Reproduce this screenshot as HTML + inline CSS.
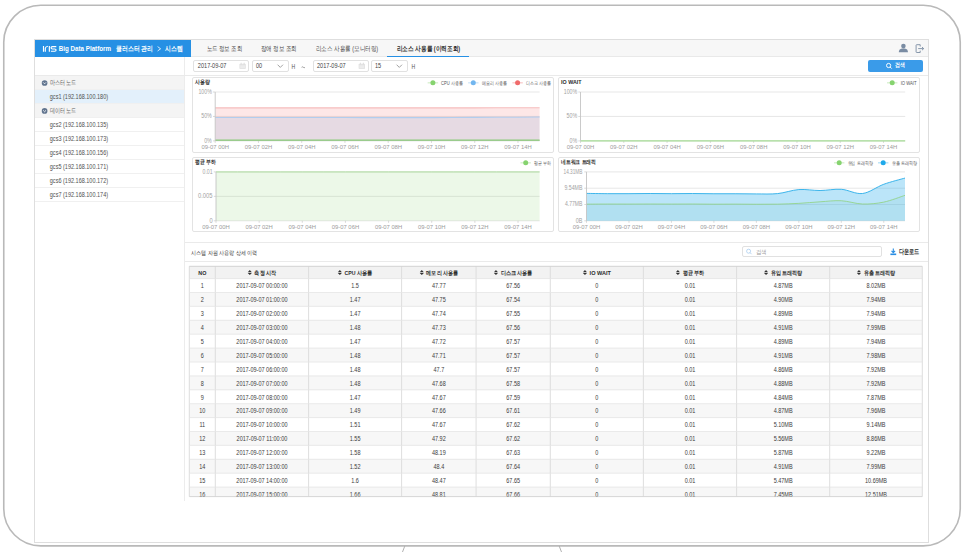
<!DOCTYPE html>
<html><head><meta charset="utf-8"><title>IRIS Big Data Platform</title><style>
*{margin:0;padding:0;box-sizing:border-box}
html,body{width:967px;height:552px;overflow:hidden;background:#fff}
body{position:relative;font-family:"Liberation Sans", sans-serif;color:#333}
.panel,.srow,.thead,.trow,.box{position:absolute}
.app{position:absolute;left:34px;top:39px;width:895px;height:504px;border:1px solid #dedede;background:#fff}
.hdr{position:absolute;left:35px;top:40px;width:156px;height:17px;background:#2690e4}
.tabbar{position:absolute;left:191px;top:40px;width:737px;height:17.3px;background:#f7f7f7;border-bottom:1px solid #e9e9e9}
.uline{position:absolute;left:387.3px;top:55.8px;width:82.2px;height:1.3px;background:#2690e4}
.side{position:absolute;left:35px;top:57px;width:149.5px;height:444px;border-right:1px solid #ececec;background:#fff}
.hline{position:absolute;height:1px;background:#eaeaea}
.srow{left:35px;width:149px;height:14px;border-bottom:1px solid #f0f0f0}
.sgrp{background:#f4f4f4}
.ssel{background:#e3f0fb}
.box{border:1px solid #e1e1e1;border-radius:2px;background:#fff}
.btn{position:absolute;left:867.5px;top:59.9px;width:55.7px;height:11.8px;background:#3a9be9;border-radius:2px}
.panel{border:1px solid #e3e3e3;border-radius:2px;background:#fff}
svg.ov{position:absolute;left:0;top:0}
svg text{font-family:"Liberation Sans", sans-serif}
.thead{background:#f2f2f2}
.trow{background:#f7f7f7}
</style></head><body>
<svg class="ov" width="967" height="552" viewBox="0 0 967 552"><rect x="3.75" y="5.25" width="956.5" height="540.6" rx="37" ry="37" fill="#fff" stroke="#b9b9b9" stroke-width="1.6"/><line x1="404.8" y1="546" x2="402.3" y2="552.5" stroke="#b0b0b0" stroke-width="1"/><line x1="559.2" y1="546" x2="561.7" y2="552.5" stroke="#b0b0b0" stroke-width="1"/></svg>
<div class="app"></div>
<div class="tabbar"></div>
<div class="hdr"></div>
<div class="uline"></div>
<div class="side"></div>
<div class="hline" style="left:35px;top:74.8px;width:893px"></div>
<div class="srow sgrp" style="top:75.70px"></div>
<div class="srow ssel" style="top:89.68px"></div>
<div class="srow sgrp" style="top:103.66px"></div>
<div class="srow sitem" style="top:117.64px"></div>
<div class="srow sitem" style="top:131.62px"></div>
<div class="srow sitem" style="top:145.60px"></div>
<div class="srow sitem" style="top:159.58px"></div>
<div class="srow sitem" style="top:173.56px"></div>
<div class="srow sitem" style="top:187.54px"></div>
<div class="btn"></div>
<div class="panel" style="left:192.00px;top:77.30px;width:362.00px;height:75.30px"></div>
<div class="panel" style="left:558.00px;top:77.30px;width:362.00px;height:75.30px"></div>
<div class="panel" style="left:192.00px;top:157.30px;width:362.00px;height:75.10px"></div>
<div class="panel" style="left:558.00px;top:157.30px;width:362.00px;height:75.10px"></div>
<div class="box" style="left:193.40px;top:60.2px;width:56px;height:11.7px"></div>
<div class="box" style="left:252.00px;top:60.2px;width:37px;height:11.7px"></div>
<div class="box" style="left:312.60px;top:60.2px;width:56px;height:11.7px"></div>
<div class="box" style="left:371.00px;top:60.2px;width:37px;height:11.7px"></div>
<div class="hline" style="left:185px;top:242.2px;width:743px"></div>
<div class="hline" style="left:185px;top:260.8px;width:743px"></div>
<div class="box" style="left:742px;top:246.2px;width:139.6px;height:11.2px"></div>
<div class="thead" style="left:189.30px;top:266.30px;width:733.00px;height:12.30px"></div>
<div class="trow" style="left:189.30px;top:292.50px;width:733.00px;height:13.90px"></div>
<div class="trow" style="left:189.30px;top:320.30px;width:733.00px;height:13.90px"></div>
<div class="trow" style="left:189.30px;top:348.10px;width:733.00px;height:13.90px"></div>
<div class="trow" style="left:189.30px;top:375.90px;width:733.00px;height:13.90px"></div>
<div class="trow" style="left:189.30px;top:403.70px;width:733.00px;height:13.90px"></div>
<div class="trow" style="left:189.30px;top:431.50px;width:733.00px;height:13.90px"></div>
<div class="trow" style="left:189.30px;top:459.30px;width:733.00px;height:13.90px"></div>
<div class="trow" style="left:189.30px;top:487.10px;width:733.00px;height:9.50px"></div>
<svg class="ov" width="967" height="552" viewBox="0 0 967 552"><line x1="189.30" y1="266.30" x2="189.30" y2="496.60" stroke="#dadada" stroke-width="0.9"/><line x1="215.30" y1="266.30" x2="215.30" y2="496.60" stroke="#dadada" stroke-width="0.9"/><line x1="308.60" y1="266.30" x2="308.60" y2="496.60" stroke="#dadada" stroke-width="0.9"/><line x1="401.60" y1="266.30" x2="401.60" y2="496.60" stroke="#dadada" stroke-width="0.9"/><line x1="476.10" y1="266.30" x2="476.10" y2="496.60" stroke="#dadada" stroke-width="0.9"/><line x1="550.30" y1="266.30" x2="550.30" y2="496.60" stroke="#dadada" stroke-width="0.9"/><line x1="643.40" y1="266.30" x2="643.40" y2="496.60" stroke="#dadada" stroke-width="0.9"/><line x1="736.60" y1="266.30" x2="736.60" y2="496.60" stroke="#dadada" stroke-width="0.9"/><line x1="829.70" y1="266.30" x2="829.70" y2="496.60" stroke="#dadada" stroke-width="0.9"/><line x1="922.30" y1="266.30" x2="922.30" y2="496.60" stroke="#dadada" stroke-width="0.9"/><line x1="189.30" y1="266.30" x2="922.30" y2="266.30" stroke="#d2d2d2" stroke-width="1"/><line x1="189.30" y1="278.60" x2="922.30" y2="278.60" stroke="#e4e4e4" stroke-width="0.8"/><line x1="189.30" y1="292.50" x2="922.30" y2="292.50" stroke="#e4e4e4" stroke-width="0.8"/><line x1="189.30" y1="306.40" x2="922.30" y2="306.40" stroke="#e4e4e4" stroke-width="0.8"/><line x1="189.30" y1="320.30" x2="922.30" y2="320.30" stroke="#e4e4e4" stroke-width="0.8"/><line x1="189.30" y1="334.20" x2="922.30" y2="334.20" stroke="#e4e4e4" stroke-width="0.8"/><line x1="189.30" y1="348.10" x2="922.30" y2="348.10" stroke="#e4e4e4" stroke-width="0.8"/><line x1="189.30" y1="362.00" x2="922.30" y2="362.00" stroke="#e4e4e4" stroke-width="0.8"/><line x1="189.30" y1="375.90" x2="922.30" y2="375.90" stroke="#e4e4e4" stroke-width="0.8"/><line x1="189.30" y1="389.80" x2="922.30" y2="389.80" stroke="#e4e4e4" stroke-width="0.8"/><line x1="189.30" y1="403.70" x2="922.30" y2="403.70" stroke="#e4e4e4" stroke-width="0.8"/><line x1="189.30" y1="417.60" x2="922.30" y2="417.60" stroke="#e4e4e4" stroke-width="0.8"/><line x1="189.30" y1="431.50" x2="922.30" y2="431.50" stroke="#e4e4e4" stroke-width="0.8"/><line x1="189.30" y1="445.40" x2="922.30" y2="445.40" stroke="#e4e4e4" stroke-width="0.8"/><line x1="189.30" y1="459.30" x2="922.30" y2="459.30" stroke="#e4e4e4" stroke-width="0.8"/><line x1="189.30" y1="473.20" x2="922.30" y2="473.20" stroke="#e4e4e4" stroke-width="0.8"/><line x1="189.30" y1="487.10" x2="922.30" y2="487.10" stroke="#e4e4e4" stroke-width="0.8"/><line x1="189.30" y1="496.60" x2="922.30" y2="496.60" stroke="#d6d6d6" stroke-width="1"/><clipPath id="tc"><rect x="185" y="260" width="745" height="236.6"/></clipPath><g clip-path="url(#tc)"><text x="202.30" y="288.30" font-size="6.6" fill="#3c3c3c" text-anchor="middle" textLength="3.06" lengthAdjust="spacingAndGlyphs">1</text><text x="261.95" y="288.30" font-size="6.6" fill="#3c3c3c" text-anchor="middle" textLength="51.17" lengthAdjust="spacingAndGlyphs">2017-09-07 00:00:00</text><text x="355.10" y="288.30" font-size="6.6" fill="#3c3c3c" text-anchor="middle" textLength="7.66" lengthAdjust="spacingAndGlyphs">1.5</text><text x="438.85" y="288.30" font-size="6.6" fill="#3c3c3c" text-anchor="middle" textLength="13.79" lengthAdjust="spacingAndGlyphs">47.77</text><text x="513.20" y="288.30" font-size="6.6" fill="#3c3c3c" text-anchor="middle" textLength="13.79" lengthAdjust="spacingAndGlyphs">67.56</text><text x="596.85" y="288.30" font-size="6.6" fill="#3c3c3c" text-anchor="middle" textLength="3.06" lengthAdjust="spacingAndGlyphs">0</text><text x="690.00" y="288.30" font-size="6.6" fill="#3c3c3c" text-anchor="middle" textLength="10.73" lengthAdjust="spacingAndGlyphs">0.01</text><text x="783.15" y="288.30" font-size="6.6" fill="#3c3c3c" text-anchor="middle" textLength="18.99" lengthAdjust="spacingAndGlyphs">4.87MB</text><text x="876.00" y="288.30" font-size="6.6" fill="#3c3c3c" text-anchor="middle" textLength="18.99" lengthAdjust="spacingAndGlyphs">8.02MB</text><text x="202.30" y="302.20" font-size="6.6" fill="#3c3c3c" text-anchor="middle" textLength="3.06" lengthAdjust="spacingAndGlyphs">2</text><text x="261.95" y="302.20" font-size="6.6" fill="#3c3c3c" text-anchor="middle" textLength="51.17" lengthAdjust="spacingAndGlyphs">2017-09-07 01:00:00</text><text x="355.10" y="302.20" font-size="6.6" fill="#3c3c3c" text-anchor="middle" textLength="10.73" lengthAdjust="spacingAndGlyphs">1.47</text><text x="438.85" y="302.20" font-size="6.6" fill="#3c3c3c" text-anchor="middle" textLength="13.79" lengthAdjust="spacingAndGlyphs">47.75</text><text x="513.20" y="302.20" font-size="6.6" fill="#3c3c3c" text-anchor="middle" textLength="13.79" lengthAdjust="spacingAndGlyphs">67.54</text><text x="596.85" y="302.20" font-size="6.6" fill="#3c3c3c" text-anchor="middle" textLength="3.06" lengthAdjust="spacingAndGlyphs">0</text><text x="690.00" y="302.20" font-size="6.6" fill="#3c3c3c" text-anchor="middle" textLength="10.73" lengthAdjust="spacingAndGlyphs">0.01</text><text x="783.15" y="302.20" font-size="6.6" fill="#3c3c3c" text-anchor="middle" textLength="18.99" lengthAdjust="spacingAndGlyphs">4.90MB</text><text x="876.00" y="302.20" font-size="6.6" fill="#3c3c3c" text-anchor="middle" textLength="18.99" lengthAdjust="spacingAndGlyphs">7.94MB</text><text x="202.30" y="316.10" font-size="6.6" fill="#3c3c3c" text-anchor="middle" textLength="3.06" lengthAdjust="spacingAndGlyphs">3</text><text x="261.95" y="316.10" font-size="6.6" fill="#3c3c3c" text-anchor="middle" textLength="51.17" lengthAdjust="spacingAndGlyphs">2017-09-07 02:00:00</text><text x="355.10" y="316.10" font-size="6.6" fill="#3c3c3c" text-anchor="middle" textLength="10.73" lengthAdjust="spacingAndGlyphs">1.47</text><text x="438.85" y="316.10" font-size="6.6" fill="#3c3c3c" text-anchor="middle" textLength="13.79" lengthAdjust="spacingAndGlyphs">47.74</text><text x="513.20" y="316.10" font-size="6.6" fill="#3c3c3c" text-anchor="middle" textLength="13.79" lengthAdjust="spacingAndGlyphs">67.55</text><text x="596.85" y="316.10" font-size="6.6" fill="#3c3c3c" text-anchor="middle" textLength="3.06" lengthAdjust="spacingAndGlyphs">0</text><text x="690.00" y="316.10" font-size="6.6" fill="#3c3c3c" text-anchor="middle" textLength="10.73" lengthAdjust="spacingAndGlyphs">0.01</text><text x="783.15" y="316.10" font-size="6.6" fill="#3c3c3c" text-anchor="middle" textLength="18.99" lengthAdjust="spacingAndGlyphs">4.89MB</text><text x="876.00" y="316.10" font-size="6.6" fill="#3c3c3c" text-anchor="middle" textLength="18.99" lengthAdjust="spacingAndGlyphs">7.94MB</text><text x="202.30" y="330.00" font-size="6.6" fill="#3c3c3c" text-anchor="middle" textLength="3.06" lengthAdjust="spacingAndGlyphs">4</text><text x="261.95" y="330.00" font-size="6.6" fill="#3c3c3c" text-anchor="middle" textLength="51.17" lengthAdjust="spacingAndGlyphs">2017-09-07 03:00:00</text><text x="355.10" y="330.00" font-size="6.6" fill="#3c3c3c" text-anchor="middle" textLength="10.73" lengthAdjust="spacingAndGlyphs">1.48</text><text x="438.85" y="330.00" font-size="6.6" fill="#3c3c3c" text-anchor="middle" textLength="13.79" lengthAdjust="spacingAndGlyphs">47.73</text><text x="513.20" y="330.00" font-size="6.6" fill="#3c3c3c" text-anchor="middle" textLength="13.79" lengthAdjust="spacingAndGlyphs">67.56</text><text x="596.85" y="330.00" font-size="6.6" fill="#3c3c3c" text-anchor="middle" textLength="3.06" lengthAdjust="spacingAndGlyphs">0</text><text x="690.00" y="330.00" font-size="6.6" fill="#3c3c3c" text-anchor="middle" textLength="10.73" lengthAdjust="spacingAndGlyphs">0.01</text><text x="783.15" y="330.00" font-size="6.6" fill="#3c3c3c" text-anchor="middle" textLength="18.99" lengthAdjust="spacingAndGlyphs">4.91MB</text><text x="876.00" y="330.00" font-size="6.6" fill="#3c3c3c" text-anchor="middle" textLength="18.99" lengthAdjust="spacingAndGlyphs">7.99MB</text><text x="202.30" y="343.90" font-size="6.6" fill="#3c3c3c" text-anchor="middle" textLength="3.06" lengthAdjust="spacingAndGlyphs">5</text><text x="261.95" y="343.90" font-size="6.6" fill="#3c3c3c" text-anchor="middle" textLength="51.17" lengthAdjust="spacingAndGlyphs">2017-09-07 04:00:00</text><text x="355.10" y="343.90" font-size="6.6" fill="#3c3c3c" text-anchor="middle" textLength="10.73" lengthAdjust="spacingAndGlyphs">1.47</text><text x="438.85" y="343.90" font-size="6.6" fill="#3c3c3c" text-anchor="middle" textLength="13.79" lengthAdjust="spacingAndGlyphs">47.72</text><text x="513.20" y="343.90" font-size="6.6" fill="#3c3c3c" text-anchor="middle" textLength="13.79" lengthAdjust="spacingAndGlyphs">67.57</text><text x="596.85" y="343.90" font-size="6.6" fill="#3c3c3c" text-anchor="middle" textLength="3.06" lengthAdjust="spacingAndGlyphs">0</text><text x="690.00" y="343.90" font-size="6.6" fill="#3c3c3c" text-anchor="middle" textLength="10.73" lengthAdjust="spacingAndGlyphs">0.01</text><text x="783.15" y="343.90" font-size="6.6" fill="#3c3c3c" text-anchor="middle" textLength="18.99" lengthAdjust="spacingAndGlyphs">4.89MB</text><text x="876.00" y="343.90" font-size="6.6" fill="#3c3c3c" text-anchor="middle" textLength="18.99" lengthAdjust="spacingAndGlyphs">7.94MB</text><text x="202.30" y="357.80" font-size="6.6" fill="#3c3c3c" text-anchor="middle" textLength="3.06" lengthAdjust="spacingAndGlyphs">6</text><text x="261.95" y="357.80" font-size="6.6" fill="#3c3c3c" text-anchor="middle" textLength="51.17" lengthAdjust="spacingAndGlyphs">2017-09-07 05:00:00</text><text x="355.10" y="357.80" font-size="6.6" fill="#3c3c3c" text-anchor="middle" textLength="10.73" lengthAdjust="spacingAndGlyphs">1.48</text><text x="438.85" y="357.80" font-size="6.6" fill="#3c3c3c" text-anchor="middle" textLength="13.79" lengthAdjust="spacingAndGlyphs">47.71</text><text x="513.20" y="357.80" font-size="6.6" fill="#3c3c3c" text-anchor="middle" textLength="13.79" lengthAdjust="spacingAndGlyphs">67.57</text><text x="596.85" y="357.80" font-size="6.6" fill="#3c3c3c" text-anchor="middle" textLength="3.06" lengthAdjust="spacingAndGlyphs">0</text><text x="690.00" y="357.80" font-size="6.6" fill="#3c3c3c" text-anchor="middle" textLength="10.73" lengthAdjust="spacingAndGlyphs">0.01</text><text x="783.15" y="357.80" font-size="6.6" fill="#3c3c3c" text-anchor="middle" textLength="18.99" lengthAdjust="spacingAndGlyphs">4.91MB</text><text x="876.00" y="357.80" font-size="6.6" fill="#3c3c3c" text-anchor="middle" textLength="18.99" lengthAdjust="spacingAndGlyphs">7.98MB</text><text x="202.30" y="371.70" font-size="6.6" fill="#3c3c3c" text-anchor="middle" textLength="3.06" lengthAdjust="spacingAndGlyphs">7</text><text x="261.95" y="371.70" font-size="6.6" fill="#3c3c3c" text-anchor="middle" textLength="51.17" lengthAdjust="spacingAndGlyphs">2017-09-07 06:00:00</text><text x="355.10" y="371.70" font-size="6.6" fill="#3c3c3c" text-anchor="middle" textLength="10.73" lengthAdjust="spacingAndGlyphs">1.48</text><text x="438.85" y="371.70" font-size="6.6" fill="#3c3c3c" text-anchor="middle" textLength="10.73" lengthAdjust="spacingAndGlyphs">47.7</text><text x="513.20" y="371.70" font-size="6.6" fill="#3c3c3c" text-anchor="middle" textLength="13.79" lengthAdjust="spacingAndGlyphs">67.57</text><text x="596.85" y="371.70" font-size="6.6" fill="#3c3c3c" text-anchor="middle" textLength="3.06" lengthAdjust="spacingAndGlyphs">0</text><text x="690.00" y="371.70" font-size="6.6" fill="#3c3c3c" text-anchor="middle" textLength="10.73" lengthAdjust="spacingAndGlyphs">0.01</text><text x="783.15" y="371.70" font-size="6.6" fill="#3c3c3c" text-anchor="middle" textLength="18.99" lengthAdjust="spacingAndGlyphs">4.86MB</text><text x="876.00" y="371.70" font-size="6.6" fill="#3c3c3c" text-anchor="middle" textLength="18.99" lengthAdjust="spacingAndGlyphs">7.92MB</text><text x="202.30" y="385.60" font-size="6.6" fill="#3c3c3c" text-anchor="middle" textLength="3.06" lengthAdjust="spacingAndGlyphs">8</text><text x="261.95" y="385.60" font-size="6.6" fill="#3c3c3c" text-anchor="middle" textLength="51.17" lengthAdjust="spacingAndGlyphs">2017-09-07 07:00:00</text><text x="355.10" y="385.60" font-size="6.6" fill="#3c3c3c" text-anchor="middle" textLength="10.73" lengthAdjust="spacingAndGlyphs">1.48</text><text x="438.85" y="385.60" font-size="6.6" fill="#3c3c3c" text-anchor="middle" textLength="13.79" lengthAdjust="spacingAndGlyphs">47.68</text><text x="513.20" y="385.60" font-size="6.6" fill="#3c3c3c" text-anchor="middle" textLength="13.79" lengthAdjust="spacingAndGlyphs">67.58</text><text x="596.85" y="385.60" font-size="6.6" fill="#3c3c3c" text-anchor="middle" textLength="3.06" lengthAdjust="spacingAndGlyphs">0</text><text x="690.00" y="385.60" font-size="6.6" fill="#3c3c3c" text-anchor="middle" textLength="10.73" lengthAdjust="spacingAndGlyphs">0.01</text><text x="783.15" y="385.60" font-size="6.6" fill="#3c3c3c" text-anchor="middle" textLength="18.99" lengthAdjust="spacingAndGlyphs">4.88MB</text><text x="876.00" y="385.60" font-size="6.6" fill="#3c3c3c" text-anchor="middle" textLength="18.99" lengthAdjust="spacingAndGlyphs">7.92MB</text><text x="202.30" y="399.50" font-size="6.6" fill="#3c3c3c" text-anchor="middle" textLength="3.06" lengthAdjust="spacingAndGlyphs">9</text><text x="261.95" y="399.50" font-size="6.6" fill="#3c3c3c" text-anchor="middle" textLength="51.17" lengthAdjust="spacingAndGlyphs">2017-09-07 08:00:00</text><text x="355.10" y="399.50" font-size="6.6" fill="#3c3c3c" text-anchor="middle" textLength="10.73" lengthAdjust="spacingAndGlyphs">1.47</text><text x="438.85" y="399.50" font-size="6.6" fill="#3c3c3c" text-anchor="middle" textLength="13.79" lengthAdjust="spacingAndGlyphs">47.67</text><text x="513.20" y="399.50" font-size="6.6" fill="#3c3c3c" text-anchor="middle" textLength="13.79" lengthAdjust="spacingAndGlyphs">67.59</text><text x="596.85" y="399.50" font-size="6.6" fill="#3c3c3c" text-anchor="middle" textLength="3.06" lengthAdjust="spacingAndGlyphs">0</text><text x="690.00" y="399.50" font-size="6.6" fill="#3c3c3c" text-anchor="middle" textLength="10.73" lengthAdjust="spacingAndGlyphs">0.01</text><text x="783.15" y="399.50" font-size="6.6" fill="#3c3c3c" text-anchor="middle" textLength="18.99" lengthAdjust="spacingAndGlyphs">4.84MB</text><text x="876.00" y="399.50" font-size="6.6" fill="#3c3c3c" text-anchor="middle" textLength="18.99" lengthAdjust="spacingAndGlyphs">7.87MB</text><text x="202.30" y="413.40" font-size="6.6" fill="#3c3c3c" text-anchor="middle" textLength="6.13" lengthAdjust="spacingAndGlyphs">10</text><text x="261.95" y="413.40" font-size="6.6" fill="#3c3c3c" text-anchor="middle" textLength="51.17" lengthAdjust="spacingAndGlyphs">2017-09-07 09:00:00</text><text x="355.10" y="413.40" font-size="6.6" fill="#3c3c3c" text-anchor="middle" textLength="10.73" lengthAdjust="spacingAndGlyphs">1.49</text><text x="438.85" y="413.40" font-size="6.6" fill="#3c3c3c" text-anchor="middle" textLength="13.79" lengthAdjust="spacingAndGlyphs">47.66</text><text x="513.20" y="413.40" font-size="6.6" fill="#3c3c3c" text-anchor="middle" textLength="13.79" lengthAdjust="spacingAndGlyphs">67.61</text><text x="596.85" y="413.40" font-size="6.6" fill="#3c3c3c" text-anchor="middle" textLength="3.06" lengthAdjust="spacingAndGlyphs">0</text><text x="690.00" y="413.40" font-size="6.6" fill="#3c3c3c" text-anchor="middle" textLength="10.73" lengthAdjust="spacingAndGlyphs">0.01</text><text x="783.15" y="413.40" font-size="6.6" fill="#3c3c3c" text-anchor="middle" textLength="18.99" lengthAdjust="spacingAndGlyphs">4.87MB</text><text x="876.00" y="413.40" font-size="6.6" fill="#3c3c3c" text-anchor="middle" textLength="18.99" lengthAdjust="spacingAndGlyphs">7.96MB</text><text x="202.30" y="427.30" font-size="6.6" fill="#3c3c3c" text-anchor="middle" textLength="5.72" lengthAdjust="spacingAndGlyphs">11</text><text x="261.95" y="427.30" font-size="6.6" fill="#3c3c3c" text-anchor="middle" textLength="51.17" lengthAdjust="spacingAndGlyphs">2017-09-07 10:00:00</text><text x="355.10" y="427.30" font-size="6.6" fill="#3c3c3c" text-anchor="middle" textLength="10.73" lengthAdjust="spacingAndGlyphs">1.51</text><text x="438.85" y="427.30" font-size="6.6" fill="#3c3c3c" text-anchor="middle" textLength="13.79" lengthAdjust="spacingAndGlyphs">47.67</text><text x="513.20" y="427.30" font-size="6.6" fill="#3c3c3c" text-anchor="middle" textLength="13.79" lengthAdjust="spacingAndGlyphs">67.62</text><text x="596.85" y="427.30" font-size="6.6" fill="#3c3c3c" text-anchor="middle" textLength="3.06" lengthAdjust="spacingAndGlyphs">0</text><text x="690.00" y="427.30" font-size="6.6" fill="#3c3c3c" text-anchor="middle" textLength="10.73" lengthAdjust="spacingAndGlyphs">0.01</text><text x="783.15" y="427.30" font-size="6.6" fill="#3c3c3c" text-anchor="middle" textLength="18.99" lengthAdjust="spacingAndGlyphs">5.10MB</text><text x="876.00" y="427.30" font-size="6.6" fill="#3c3c3c" text-anchor="middle" textLength="18.99" lengthAdjust="spacingAndGlyphs">9.14MB</text><text x="202.30" y="441.20" font-size="6.6" fill="#3c3c3c" text-anchor="middle" textLength="6.13" lengthAdjust="spacingAndGlyphs">12</text><text x="261.95" y="441.20" font-size="6.6" fill="#3c3c3c" text-anchor="middle" textLength="50.76" lengthAdjust="spacingAndGlyphs">2017-09-07 11:00:00</text><text x="355.10" y="441.20" font-size="6.6" fill="#3c3c3c" text-anchor="middle" textLength="10.73" lengthAdjust="spacingAndGlyphs">1.55</text><text x="438.85" y="441.20" font-size="6.6" fill="#3c3c3c" text-anchor="middle" textLength="13.79" lengthAdjust="spacingAndGlyphs">47.92</text><text x="513.20" y="441.20" font-size="6.6" fill="#3c3c3c" text-anchor="middle" textLength="13.79" lengthAdjust="spacingAndGlyphs">67.62</text><text x="596.85" y="441.20" font-size="6.6" fill="#3c3c3c" text-anchor="middle" textLength="3.06" lengthAdjust="spacingAndGlyphs">0</text><text x="690.00" y="441.20" font-size="6.6" fill="#3c3c3c" text-anchor="middle" textLength="10.73" lengthAdjust="spacingAndGlyphs">0.01</text><text x="783.15" y="441.20" font-size="6.6" fill="#3c3c3c" text-anchor="middle" textLength="18.99" lengthAdjust="spacingAndGlyphs">5.56MB</text><text x="876.00" y="441.20" font-size="6.6" fill="#3c3c3c" text-anchor="middle" textLength="18.99" lengthAdjust="spacingAndGlyphs">8.86MB</text><text x="202.30" y="455.10" font-size="6.6" fill="#3c3c3c" text-anchor="middle" textLength="6.13" lengthAdjust="spacingAndGlyphs">13</text><text x="261.95" y="455.10" font-size="6.6" fill="#3c3c3c" text-anchor="middle" textLength="51.17" lengthAdjust="spacingAndGlyphs">2017-09-07 12:00:00</text><text x="355.10" y="455.10" font-size="6.6" fill="#3c3c3c" text-anchor="middle" textLength="10.73" lengthAdjust="spacingAndGlyphs">1.58</text><text x="438.85" y="455.10" font-size="6.6" fill="#3c3c3c" text-anchor="middle" textLength="13.79" lengthAdjust="spacingAndGlyphs">48.19</text><text x="513.20" y="455.10" font-size="6.6" fill="#3c3c3c" text-anchor="middle" textLength="13.79" lengthAdjust="spacingAndGlyphs">67.63</text><text x="596.85" y="455.10" font-size="6.6" fill="#3c3c3c" text-anchor="middle" textLength="3.06" lengthAdjust="spacingAndGlyphs">0</text><text x="690.00" y="455.10" font-size="6.6" fill="#3c3c3c" text-anchor="middle" textLength="10.73" lengthAdjust="spacingAndGlyphs">0.01</text><text x="783.15" y="455.10" font-size="6.6" fill="#3c3c3c" text-anchor="middle" textLength="18.99" lengthAdjust="spacingAndGlyphs">5.87MB</text><text x="876.00" y="455.10" font-size="6.6" fill="#3c3c3c" text-anchor="middle" textLength="18.99" lengthAdjust="spacingAndGlyphs">9.22MB</text><text x="202.30" y="469.00" font-size="6.6" fill="#3c3c3c" text-anchor="middle" textLength="6.13" lengthAdjust="spacingAndGlyphs">14</text><text x="261.95" y="469.00" font-size="6.6" fill="#3c3c3c" text-anchor="middle" textLength="51.17" lengthAdjust="spacingAndGlyphs">2017-09-07 13:00:00</text><text x="355.10" y="469.00" font-size="6.6" fill="#3c3c3c" text-anchor="middle" textLength="10.73" lengthAdjust="spacingAndGlyphs">1.52</text><text x="438.85" y="469.00" font-size="6.6" fill="#3c3c3c" text-anchor="middle" textLength="10.73" lengthAdjust="spacingAndGlyphs">48.4</text><text x="513.20" y="469.00" font-size="6.6" fill="#3c3c3c" text-anchor="middle" textLength="13.79" lengthAdjust="spacingAndGlyphs">67.64</text><text x="596.85" y="469.00" font-size="6.6" fill="#3c3c3c" text-anchor="middle" textLength="3.06" lengthAdjust="spacingAndGlyphs">0</text><text x="690.00" y="469.00" font-size="6.6" fill="#3c3c3c" text-anchor="middle" textLength="10.73" lengthAdjust="spacingAndGlyphs">0.01</text><text x="783.15" y="469.00" font-size="6.6" fill="#3c3c3c" text-anchor="middle" textLength="18.99" lengthAdjust="spacingAndGlyphs">4.91MB</text><text x="876.00" y="469.00" font-size="6.6" fill="#3c3c3c" text-anchor="middle" textLength="18.99" lengthAdjust="spacingAndGlyphs">7.99MB</text><text x="202.30" y="482.90" font-size="6.6" fill="#3c3c3c" text-anchor="middle" textLength="6.13" lengthAdjust="spacingAndGlyphs">15</text><text x="261.95" y="482.90" font-size="6.6" fill="#3c3c3c" text-anchor="middle" textLength="51.17" lengthAdjust="spacingAndGlyphs">2017-09-07 14:00:00</text><text x="355.10" y="482.90" font-size="6.6" fill="#3c3c3c" text-anchor="middle" textLength="7.66" lengthAdjust="spacingAndGlyphs">1.6</text><text x="438.85" y="482.90" font-size="6.6" fill="#3c3c3c" text-anchor="middle" textLength="13.79" lengthAdjust="spacingAndGlyphs">48.47</text><text x="513.20" y="482.90" font-size="6.6" fill="#3c3c3c" text-anchor="middle" textLength="13.79" lengthAdjust="spacingAndGlyphs">67.65</text><text x="596.85" y="482.90" font-size="6.6" fill="#3c3c3c" text-anchor="middle" textLength="3.06" lengthAdjust="spacingAndGlyphs">0</text><text x="690.00" y="482.90" font-size="6.6" fill="#3c3c3c" text-anchor="middle" textLength="10.73" lengthAdjust="spacingAndGlyphs">0.01</text><text x="783.15" y="482.90" font-size="6.6" fill="#3c3c3c" text-anchor="middle" textLength="18.99" lengthAdjust="spacingAndGlyphs">5.47MB</text><text x="876.00" y="482.90" font-size="6.6" fill="#3c3c3c" text-anchor="middle" textLength="22.06" lengthAdjust="spacingAndGlyphs">10.69MB</text><text x="202.30" y="496.80" font-size="6.6" fill="#3c3c3c" text-anchor="middle" textLength="6.13" lengthAdjust="spacingAndGlyphs">16</text><text x="261.95" y="496.80" font-size="6.6" fill="#3c3c3c" text-anchor="middle" textLength="51.17" lengthAdjust="spacingAndGlyphs">2017-09-07 15:00:00</text><text x="355.10" y="496.80" font-size="6.6" fill="#3c3c3c" text-anchor="middle" textLength="10.73" lengthAdjust="spacingAndGlyphs">1.66</text><text x="438.85" y="496.80" font-size="6.6" fill="#3c3c3c" text-anchor="middle" textLength="13.79" lengthAdjust="spacingAndGlyphs">48.81</text><text x="513.20" y="496.80" font-size="6.6" fill="#3c3c3c" text-anchor="middle" textLength="13.79" lengthAdjust="spacingAndGlyphs">67.66</text><text x="596.85" y="496.80" font-size="6.6" fill="#3c3c3c" text-anchor="middle" textLength="3.06" lengthAdjust="spacingAndGlyphs">0</text><text x="690.00" y="496.80" font-size="6.6" fill="#3c3c3c" text-anchor="middle" textLength="10.73" lengthAdjust="spacingAndGlyphs">0.01</text><text x="783.15" y="496.80" font-size="6.6" fill="#3c3c3c" text-anchor="middle" textLength="18.99" lengthAdjust="spacingAndGlyphs">7.45MB</text><text x="876.00" y="496.80" font-size="6.6" fill="#3c3c3c" text-anchor="middle" textLength="22.06" lengthAdjust="spacingAndGlyphs">12.51MB</text></g><text x="195.20" y="84.40" font-size="5.90" fill="#2b2b2b" font-weight="bold" textLength="14.80" lengthAdjust="spacingAndGlyphs">사용량</text><line x1="215.20" y1="92.00" x2="539.60" y2="92.00" stroke="#e4e4e4" stroke-width="0.9"/><line x1="213.00" y1="92.00" x2="215.20" y2="92.00" stroke="#cfcfcf" stroke-width="0.8"/><text x="211.80" y="93.90" font-size="6.40" fill="#a2a2a2" text-anchor="end" textLength="13.40" lengthAdjust="spacingAndGlyphs">100%</text><line x1="215.20" y1="116.45" x2="539.60" y2="116.45" stroke="#e4e4e4" stroke-width="0.9"/><line x1="213.00" y1="116.45" x2="215.20" y2="116.45" stroke="#cfcfcf" stroke-width="0.8"/><text x="211.80" y="118.35" font-size="6.40" fill="#a2a2a2" text-anchor="end" textLength="10.60" lengthAdjust="spacingAndGlyphs">50%</text><line x1="215.20" y1="140.90" x2="539.60" y2="140.90" stroke="#e4e4e4" stroke-width="0.9"/><line x1="213.00" y1="140.90" x2="215.20" y2="140.90" stroke="#cfcfcf" stroke-width="0.8"/><text x="211.80" y="142.80" font-size="6.40" fill="#a2a2a2" text-anchor="end" textLength="7.60" lengthAdjust="spacingAndGlyphs">0%</text><line x1="215.20" y1="140.90" x2="215.20" y2="142.90" stroke="#cfcfcf" stroke-width="0.8"/><text x="215.20" y="148.90" font-size="5.90" fill="#9c9c9c" text-anchor="middle" textLength="27.40" lengthAdjust="spacingAndGlyphs">09-07 00H</text><line x1="258.45" y1="140.90" x2="258.45" y2="142.90" stroke="#cfcfcf" stroke-width="0.8"/><text x="258.45" y="148.90" font-size="5.90" fill="#9c9c9c" text-anchor="middle" textLength="27.40" lengthAdjust="spacingAndGlyphs">09-07 02H</text><line x1="301.71" y1="140.90" x2="301.71" y2="142.90" stroke="#cfcfcf" stroke-width="0.8"/><text x="301.71" y="148.90" font-size="5.90" fill="#9c9c9c" text-anchor="middle" textLength="27.40" lengthAdjust="spacingAndGlyphs">09-07 04H</text><line x1="344.96" y1="140.90" x2="344.96" y2="142.90" stroke="#cfcfcf" stroke-width="0.8"/><text x="344.96" y="148.90" font-size="5.90" fill="#9c9c9c" text-anchor="middle" textLength="27.40" lengthAdjust="spacingAndGlyphs">09-07 06H</text><line x1="388.21" y1="140.90" x2="388.21" y2="142.90" stroke="#cfcfcf" stroke-width="0.8"/><text x="388.21" y="148.90" font-size="5.90" fill="#9c9c9c" text-anchor="middle" textLength="27.40" lengthAdjust="spacingAndGlyphs">09-07 08H</text><line x1="431.47" y1="140.90" x2="431.47" y2="142.90" stroke="#cfcfcf" stroke-width="0.8"/><text x="431.47" y="148.90" font-size="5.90" fill="#9c9c9c" text-anchor="middle" textLength="27.40" lengthAdjust="spacingAndGlyphs">09-07 10H</text><line x1="474.72" y1="140.90" x2="474.72" y2="142.90" stroke="#cfcfcf" stroke-width="0.8"/><text x="474.72" y="148.90" font-size="5.90" fill="#9c9c9c" text-anchor="middle" textLength="27.40" lengthAdjust="spacingAndGlyphs">09-07 12H</text><line x1="517.97" y1="140.90" x2="517.97" y2="142.90" stroke="#cfcfcf" stroke-width="0.8"/><text x="517.97" y="148.90" font-size="5.90" fill="#9c9c9c" text-anchor="middle" textLength="27.40" lengthAdjust="spacingAndGlyphs">09-07 14H</text><path d="M215.20,107.86 L236.83,107.87 L258.45,107.87 L280.08,107.86 L301.71,107.86 L323.33,107.86 L344.96,107.86 L366.59,107.85 L388.21,107.85 L409.84,107.84 L431.47,107.83 L453.09,107.83 L474.72,107.83 L496.35,107.82 L517.97,107.82 L539.60,107.81 L539.60,140.90 L215.20,140.90 Z" fill="rgba(240,107,107,0.16)"/><path d="M215.20,117.54 L236.83,117.55 L258.45,117.56 L280.08,117.56 L301.71,117.56 L323.33,117.57 L344.96,117.57 L366.59,117.58 L388.21,117.59 L409.84,117.59 L431.47,117.59 L453.09,117.47 L474.72,117.34 L496.35,117.23 L517.97,117.20 L539.60,117.03 L539.60,140.90 L215.20,140.90 Z" fill="rgba(99,150,210,0.15)"/><path d="M215.20,140.17 L236.83,140.18 L258.45,140.18 L280.08,140.18 L301.71,140.18 L323.33,140.18 L344.96,140.18 L366.59,140.18 L388.21,140.18 L409.84,140.17 L431.47,140.16 L453.09,140.14 L474.72,140.13 L496.35,140.16 L517.97,140.12 L539.60,140.09 L539.60,140.90 L215.20,140.90 Z" fill="rgba(134,211,111,0.3)"/><path d="M215.20,107.86 L236.83,107.87 L258.45,107.87 L280.08,107.86 L301.71,107.86 L323.33,107.86 L344.96,107.86 L366.59,107.85 L388.21,107.85 L409.84,107.84 L431.47,107.83 L453.09,107.83 L474.72,107.83 L496.35,107.82 L517.97,107.82 L539.60,107.81" fill="none" stroke="#f6bdbd" stroke-width="1.1"/><path d="M215.20,117.54 L236.83,117.55 L258.45,117.56 L280.08,117.56 L301.71,117.56 L323.33,117.57 L344.96,117.57 L366.59,117.58 L388.21,117.59 L409.84,117.59 L431.47,117.59 L453.09,117.47 L474.72,117.34 L496.35,117.23 L517.97,117.20 L539.60,117.03" fill="none" stroke="#b2cdee" stroke-width="1.1"/><path d="M215.20,140.17 L236.83,140.18 L258.45,140.18 L280.08,140.18 L301.71,140.18 L323.33,140.18 L344.96,140.18 L366.59,140.18 L388.21,140.18 L409.84,140.17 L431.47,140.16 L453.09,140.14 L474.72,140.13 L496.35,140.16 L517.97,140.12 L539.60,140.09" fill="none" stroke="#8cc97c" stroke-width="1.2"/><line x1="215.20" y1="92.00" x2="215.20" y2="140.90" stroke="#c4c4c4" stroke-width="0.9"/><line x1="427.70" y1="82.85" x2="438.10" y2="82.85" stroke="#86d36f" stroke-width="0.8" opacity="0.55"/><circle cx="432.90" cy="82.85" r="2.5" fill="#86d36f"/><text x="441.00" y="84.65" font-size="5.20" fill="#555" textLength="21.60" lengthAdjust="spacingAndGlyphs">CPU 사용률</text><line x1="468.10" y1="82.85" x2="478.50" y2="82.85" stroke="#72b6ef" stroke-width="0.8" opacity="0.55"/><circle cx="473.30" cy="82.85" r="2.5" fill="#72b6ef"/><text x="481.90" y="84.65" font-size="5.20" fill="#555" textLength="25.00" lengthAdjust="spacingAndGlyphs">메모리 사용률</text><line x1="512.40" y1="82.85" x2="522.80" y2="82.85" stroke="#f06b6b" stroke-width="0.8" opacity="0.55"/><circle cx="517.60" cy="82.85" r="2.5" fill="#f06b6b"/><text x="526.20" y="84.65" font-size="5.20" fill="#555" textLength="24.80" lengthAdjust="spacingAndGlyphs">디스크 사용률</text><text x="561.00" y="84.40" font-size="5.90" fill="#2b2b2b" font-weight="bold" textLength="20.50" lengthAdjust="spacingAndGlyphs">IO WAIT</text><line x1="580.50" y1="92.00" x2="905.20" y2="92.00" stroke="#e4e4e4" stroke-width="0.9"/><line x1="578.30" y1="92.00" x2="580.50" y2="92.00" stroke="#cfcfcf" stroke-width="0.8"/><text x="577.20" y="93.90" font-size="6.40" fill="#a2a2a2" text-anchor="end" textLength="13.40" lengthAdjust="spacingAndGlyphs">100%</text><line x1="580.50" y1="116.45" x2="905.20" y2="116.45" stroke="#e4e4e4" stroke-width="0.9"/><line x1="578.30" y1="116.45" x2="580.50" y2="116.45" stroke="#cfcfcf" stroke-width="0.8"/><text x="577.20" y="118.35" font-size="6.40" fill="#a2a2a2" text-anchor="end" textLength="10.60" lengthAdjust="spacingAndGlyphs">50%</text><line x1="580.50" y1="140.90" x2="905.20" y2="140.90" stroke="#e4e4e4" stroke-width="0.9"/><line x1="578.30" y1="140.90" x2="580.50" y2="140.90" stroke="#cfcfcf" stroke-width="0.8"/><text x="577.20" y="142.80" font-size="6.40" fill="#a2a2a2" text-anchor="end" textLength="7.60" lengthAdjust="spacingAndGlyphs">0%</text><line x1="580.50" y1="140.90" x2="580.50" y2="142.90" stroke="#cfcfcf" stroke-width="0.8"/><text x="580.50" y="148.90" font-size="5.90" fill="#9c9c9c" text-anchor="middle" textLength="27.40" lengthAdjust="spacingAndGlyphs">09-07 00H</text><line x1="623.79" y1="140.90" x2="623.79" y2="142.90" stroke="#cfcfcf" stroke-width="0.8"/><text x="623.79" y="148.90" font-size="5.90" fill="#9c9c9c" text-anchor="middle" textLength="27.40" lengthAdjust="spacingAndGlyphs">09-07 02H</text><line x1="667.09" y1="140.90" x2="667.09" y2="142.90" stroke="#cfcfcf" stroke-width="0.8"/><text x="667.09" y="148.90" font-size="5.90" fill="#9c9c9c" text-anchor="middle" textLength="27.40" lengthAdjust="spacingAndGlyphs">09-07 04H</text><line x1="710.38" y1="140.90" x2="710.38" y2="142.90" stroke="#cfcfcf" stroke-width="0.8"/><text x="710.38" y="148.90" font-size="5.90" fill="#9c9c9c" text-anchor="middle" textLength="27.40" lengthAdjust="spacingAndGlyphs">09-07 06H</text><line x1="753.67" y1="140.90" x2="753.67" y2="142.90" stroke="#cfcfcf" stroke-width="0.8"/><text x="753.67" y="148.90" font-size="5.90" fill="#9c9c9c" text-anchor="middle" textLength="27.40" lengthAdjust="spacingAndGlyphs">09-07 08H</text><line x1="796.97" y1="140.90" x2="796.97" y2="142.90" stroke="#cfcfcf" stroke-width="0.8"/><text x="796.97" y="148.90" font-size="5.90" fill="#9c9c9c" text-anchor="middle" textLength="27.40" lengthAdjust="spacingAndGlyphs">09-07 10H</text><line x1="840.26" y1="140.90" x2="840.26" y2="142.90" stroke="#cfcfcf" stroke-width="0.8"/><text x="840.26" y="148.90" font-size="5.90" fill="#9c9c9c" text-anchor="middle" textLength="27.40" lengthAdjust="spacingAndGlyphs">09-07 12H</text><line x1="883.55" y1="140.90" x2="883.55" y2="142.90" stroke="#cfcfcf" stroke-width="0.8"/><text x="883.55" y="148.90" font-size="5.90" fill="#9c9c9c" text-anchor="middle" textLength="27.40" lengthAdjust="spacingAndGlyphs">09-07 14H</text><path d="M580.50,140.90 L602.15,140.90 L623.79,140.90 L645.44,140.90 L667.09,140.90 L688.73,140.90 L710.38,140.90 L732.03,140.90 L753.67,140.90 L775.32,140.90 L796.97,140.90 L818.61,140.90 L840.26,140.90 L861.91,140.90 L883.55,140.90 L905.20,140.90 L905.20,140.90 L580.50,140.90 Z" fill="rgba(134,211,111,0.3)"/><path d="M580.50,140.90 L602.15,140.90 L623.79,140.90 L645.44,140.90 L667.09,140.90 L688.73,140.90 L710.38,140.90 L732.03,140.90 L753.67,140.90 L775.32,140.90 L796.97,140.90 L818.61,140.90 L840.26,140.90 L861.91,140.90 L883.55,140.90 L905.20,140.90" fill="none" stroke="#a6dc96" stroke-width="1.1"/><line x1="580.50" y1="92.00" x2="580.50" y2="140.90" stroke="#c4c4c4" stroke-width="0.9"/><line x1="887.00" y1="82.85" x2="897.40" y2="82.85" stroke="#86d36f" stroke-width="0.8" opacity="0.55"/><circle cx="892.20" cy="82.85" r="2.5" fill="#86d36f"/><text x="900.70" y="84.65" font-size="5.20" fill="#555" textLength="15.90" lengthAdjust="spacingAndGlyphs">IO WAIT</text><text x="195.20" y="164.40" font-size="5.90" fill="#2b2b2b" font-weight="bold" textLength="20.80" lengthAdjust="spacingAndGlyphs">평균 부하</text><line x1="216.00" y1="171.90" x2="539.60" y2="171.90" stroke="#e4e4e4" stroke-width="0.9"/><line x1="213.80" y1="171.90" x2="216.00" y2="171.90" stroke="#cfcfcf" stroke-width="0.8"/><text x="212.60" y="173.80" font-size="6.40" fill="#a2a2a2" text-anchor="end" textLength="10.10" lengthAdjust="spacingAndGlyphs">0.01</text><line x1="216.00" y1="196.35" x2="539.60" y2="196.35" stroke="#e4e4e4" stroke-width="0.9"/><line x1="213.80" y1="196.35" x2="216.00" y2="196.35" stroke="#cfcfcf" stroke-width="0.8"/><text x="212.60" y="198.25" font-size="6.40" fill="#a2a2a2" text-anchor="end" textLength="14.60" lengthAdjust="spacingAndGlyphs">0.005</text><line x1="216.00" y1="220.80" x2="539.60" y2="220.80" stroke="#e4e4e4" stroke-width="0.9"/><line x1="213.80" y1="220.80" x2="216.00" y2="220.80" stroke="#cfcfcf" stroke-width="0.8"/><text x="212.60" y="222.70" font-size="6.40" fill="#a2a2a2" text-anchor="end" textLength="3.20" lengthAdjust="spacingAndGlyphs">0</text><line x1="216.00" y1="220.80" x2="216.00" y2="222.80" stroke="#cfcfcf" stroke-width="0.8"/><text x="216.00" y="228.80" font-size="5.90" fill="#9c9c9c" text-anchor="middle" textLength="27.40" lengthAdjust="spacingAndGlyphs">09-07 00H</text><line x1="259.15" y1="220.80" x2="259.15" y2="222.80" stroke="#cfcfcf" stroke-width="0.8"/><text x="259.15" y="228.80" font-size="5.90" fill="#9c9c9c" text-anchor="middle" textLength="27.40" lengthAdjust="spacingAndGlyphs">09-07 02H</text><line x1="302.29" y1="220.80" x2="302.29" y2="222.80" stroke="#cfcfcf" stroke-width="0.8"/><text x="302.29" y="228.80" font-size="5.90" fill="#9c9c9c" text-anchor="middle" textLength="27.40" lengthAdjust="spacingAndGlyphs">09-07 04H</text><line x1="345.44" y1="220.80" x2="345.44" y2="222.80" stroke="#cfcfcf" stroke-width="0.8"/><text x="345.44" y="228.80" font-size="5.90" fill="#9c9c9c" text-anchor="middle" textLength="27.40" lengthAdjust="spacingAndGlyphs">09-07 06H</text><line x1="388.59" y1="220.80" x2="388.59" y2="222.80" stroke="#cfcfcf" stroke-width="0.8"/><text x="388.59" y="228.80" font-size="5.90" fill="#9c9c9c" text-anchor="middle" textLength="27.40" lengthAdjust="spacingAndGlyphs">09-07 08H</text><line x1="431.73" y1="220.80" x2="431.73" y2="222.80" stroke="#cfcfcf" stroke-width="0.8"/><text x="431.73" y="228.80" font-size="5.90" fill="#9c9c9c" text-anchor="middle" textLength="27.40" lengthAdjust="spacingAndGlyphs">09-07 10H</text><line x1="474.88" y1="220.80" x2="474.88" y2="222.80" stroke="#cfcfcf" stroke-width="0.8"/><text x="474.88" y="228.80" font-size="5.90" fill="#9c9c9c" text-anchor="middle" textLength="27.40" lengthAdjust="spacingAndGlyphs">09-07 12H</text><line x1="518.03" y1="220.80" x2="518.03" y2="222.80" stroke="#cfcfcf" stroke-width="0.8"/><text x="518.03" y="228.80" font-size="5.90" fill="#9c9c9c" text-anchor="middle" textLength="27.40" lengthAdjust="spacingAndGlyphs">09-07 14H</text><path d="M216.00,171.90 L237.57,171.90 L259.15,171.90 L280.72,171.90 L302.29,171.90 L323.87,171.90 L345.44,171.90 L367.01,171.90 L388.59,171.90 L410.16,171.90 L431.73,171.90 L453.31,171.90 L474.88,171.90 L496.45,171.90 L518.03,171.90 L539.60,171.90 L539.60,220.80 L216.00,220.80 Z" fill="rgba(134,211,111,0.16)"/><path d="M216.00,171.90 L237.57,171.90 L259.15,171.90 L280.72,171.90 L302.29,171.90 L323.87,171.90 L345.44,171.90 L367.01,171.90 L388.59,171.90 L410.16,171.90 L431.73,171.90 L453.31,171.90 L474.88,171.90 L496.45,171.90 L518.03,171.90 L539.60,171.90" fill="none" stroke="#a8dc98" stroke-width="0.9"/><line x1="216.00" y1="171.90" x2="216.00" y2="220.80" stroke="#c4c4c4" stroke-width="0.9"/><line x1="520.50" y1="162.85" x2="530.90" y2="162.85" stroke="#86d36f" stroke-width="0.8" opacity="0.55"/><circle cx="525.70" cy="162.85" r="2.5" fill="#86d36f"/><text x="534.00" y="164.65" font-size="5.20" fill="#555" textLength="17.00" lengthAdjust="spacingAndGlyphs">평균 부하</text><text x="561.00" y="164.40" font-size="5.90" fill="#2b2b2b" font-weight="bold" textLength="35.00" lengthAdjust="spacingAndGlyphs">네트워크 트래픽</text><line x1="586.50" y1="171.90" x2="905.00" y2="171.90" stroke="#e4e4e4" stroke-width="0.9"/><line x1="584.30" y1="171.90" x2="586.50" y2="171.90" stroke="#cfcfcf" stroke-width="0.8"/><text x="582.40" y="173.80" font-size="6.40" fill="#a2a2a2" text-anchor="end" textLength="18.80" lengthAdjust="spacingAndGlyphs">14.31MB</text><line x1="586.50" y1="188.20" x2="905.00" y2="188.20" stroke="#e4e4e4" stroke-width="0.9"/><line x1="584.30" y1="188.20" x2="586.50" y2="188.20" stroke="#cfcfcf" stroke-width="0.8"/><text x="582.40" y="190.10" font-size="6.40" fill="#a2a2a2" text-anchor="end" textLength="18.00" lengthAdjust="spacingAndGlyphs">9.54MB</text><line x1="586.50" y1="204.50" x2="905.00" y2="204.50" stroke="#e4e4e4" stroke-width="0.9"/><line x1="584.30" y1="204.50" x2="586.50" y2="204.50" stroke="#cfcfcf" stroke-width="0.8"/><text x="582.40" y="206.40" font-size="6.40" fill="#a2a2a2" text-anchor="end" textLength="17.50" lengthAdjust="spacingAndGlyphs">4.77MB</text><line x1="586.50" y1="220.80" x2="905.00" y2="220.80" stroke="#e4e4e4" stroke-width="0.9"/><line x1="584.30" y1="220.80" x2="586.50" y2="220.80" stroke="#cfcfcf" stroke-width="0.8"/><text x="582.40" y="222.70" font-size="6.40" fill="#a2a2a2" text-anchor="end" textLength="6.60" lengthAdjust="spacingAndGlyphs">0B</text><line x1="586.50" y1="220.80" x2="586.50" y2="222.80" stroke="#cfcfcf" stroke-width="0.8"/><text x="586.50" y="228.80" font-size="5.90" fill="#9c9c9c" text-anchor="middle" textLength="27.40" lengthAdjust="spacingAndGlyphs">09-07 00H</text><line x1="628.97" y1="220.80" x2="628.97" y2="222.80" stroke="#cfcfcf" stroke-width="0.8"/><text x="628.97" y="228.80" font-size="5.90" fill="#9c9c9c" text-anchor="middle" textLength="27.40" lengthAdjust="spacingAndGlyphs">09-07 02H</text><line x1="671.43" y1="220.80" x2="671.43" y2="222.80" stroke="#cfcfcf" stroke-width="0.8"/><text x="671.43" y="228.80" font-size="5.90" fill="#9c9c9c" text-anchor="middle" textLength="27.40" lengthAdjust="spacingAndGlyphs">09-07 04H</text><line x1="713.90" y1="220.80" x2="713.90" y2="222.80" stroke="#cfcfcf" stroke-width="0.8"/><text x="713.90" y="228.80" font-size="5.90" fill="#9c9c9c" text-anchor="middle" textLength="27.40" lengthAdjust="spacingAndGlyphs">09-07 06H</text><line x1="756.37" y1="220.80" x2="756.37" y2="222.80" stroke="#cfcfcf" stroke-width="0.8"/><text x="756.37" y="228.80" font-size="5.90" fill="#9c9c9c" text-anchor="middle" textLength="27.40" lengthAdjust="spacingAndGlyphs">09-07 08H</text><line x1="798.83" y1="220.80" x2="798.83" y2="222.80" stroke="#cfcfcf" stroke-width="0.8"/><text x="798.83" y="228.80" font-size="5.90" fill="#9c9c9c" text-anchor="middle" textLength="27.40" lengthAdjust="spacingAndGlyphs">09-07 10H</text><line x1="841.30" y1="220.80" x2="841.30" y2="222.80" stroke="#cfcfcf" stroke-width="0.8"/><text x="841.30" y="228.80" font-size="5.90" fill="#9c9c9c" text-anchor="middle" textLength="27.40" lengthAdjust="spacingAndGlyphs">09-07 12H</text><line x1="883.77" y1="220.80" x2="883.77" y2="222.80" stroke="#cfcfcf" stroke-width="0.8"/><text x="883.77" y="228.80" font-size="5.90" fill="#9c9c9c" text-anchor="middle" textLength="27.40" lengthAdjust="spacingAndGlyphs">09-07 14H</text><path d="M586.50,193.39 C590.04,193.44 600.66,193.62 607.73,193.67 C614.81,193.71 621.89,193.70 628.97,193.67 C636.04,193.64 643.12,193.50 650.20,193.50 C657.28,193.50 664.36,193.66 671.43,193.67 C678.51,193.67 685.59,193.52 692.67,193.53 C699.74,193.54 706.82,193.70 713.90,193.74 C720.98,193.77 728.06,193.71 735.13,193.74 C742.21,193.76 749.29,193.93 756.37,193.91 C763.44,193.88 770.52,194.32 777.60,193.60 C784.68,192.88 791.76,190.08 798.83,189.57 C805.91,189.05 812.99,190.57 820.07,190.52 C827.14,190.48 834.22,188.80 841.30,189.29 C848.38,189.79 855.46,194.33 862.53,193.50 C869.61,192.66 876.69,186.84 883.77,184.27 C890.84,181.70 901.46,179.09 905.00,178.05 L905.00,220.80 L586.50,220.80 Z" fill="rgba(31,169,234,0.3)"/><path d="M586.50,204.16 C590.04,204.14 600.66,204.07 607.73,204.06 C614.81,204.04 621.89,204.10 628.97,204.09 C636.04,204.08 643.12,204.02 650.20,204.02 C657.28,204.02 664.36,204.09 671.43,204.09 C678.51,204.09 685.59,204.00 692.67,204.02 C699.74,204.04 706.82,204.18 713.90,204.19 C720.98,204.21 728.06,204.11 735.13,204.12 C742.21,204.14 749.29,204.26 756.37,204.26 C763.44,204.27 770.52,204.31 777.60,204.16 C784.68,204.01 791.76,203.77 798.83,203.37 C805.91,202.98 812.99,202.24 820.07,201.80 C827.14,201.36 834.22,200.37 841.30,200.74 C848.38,201.11 855.46,203.79 862.53,204.02 C869.61,204.25 876.69,203.55 883.77,202.11 C890.84,200.66 901.46,196.47 905.00,195.34 L905.00,220.80 L586.50,220.80 Z" fill="rgba(120,200,200,0.14)"/><path d="M586.50,193.39 C590.04,193.44 600.66,193.62 607.73,193.67 C614.81,193.71 621.89,193.70 628.97,193.67 C636.04,193.64 643.12,193.50 650.20,193.50 C657.28,193.50 664.36,193.66 671.43,193.67 C678.51,193.67 685.59,193.52 692.67,193.53 C699.74,193.54 706.82,193.70 713.90,193.74 C720.98,193.77 728.06,193.71 735.13,193.74 C742.21,193.76 749.29,193.93 756.37,193.91 C763.44,193.88 770.52,194.32 777.60,193.60 C784.68,192.88 791.76,190.08 798.83,189.57 C805.91,189.05 812.99,190.57 820.07,190.52 C827.14,190.48 834.22,188.80 841.30,189.29 C848.38,189.79 855.46,194.33 862.53,193.50 C869.61,192.66 876.69,186.84 883.77,184.27 C890.84,181.70 901.46,179.09 905.00,178.05" fill="none" stroke="#2aaee9" stroke-width="0.9"/><path d="M586.50,204.16 C590.04,204.14 600.66,204.07 607.73,204.06 C614.81,204.04 621.89,204.10 628.97,204.09 C636.04,204.08 643.12,204.02 650.20,204.02 C657.28,204.02 664.36,204.09 671.43,204.09 C678.51,204.09 685.59,204.00 692.67,204.02 C699.74,204.04 706.82,204.18 713.90,204.19 C720.98,204.21 728.06,204.11 735.13,204.12 C742.21,204.14 749.29,204.26 756.37,204.26 C763.44,204.27 770.52,204.31 777.60,204.16 C784.68,204.01 791.76,203.77 798.83,203.37 C805.91,202.98 812.99,202.24 820.07,201.80 C827.14,201.36 834.22,200.37 841.30,200.74 C848.38,201.11 855.46,203.79 862.53,204.02 C869.61,204.25 876.69,203.55 883.77,202.11 C890.84,200.66 901.46,196.47 905.00,195.34" fill="none" stroke="#8fd27e" stroke-width="0.8"/><line x1="586.50" y1="171.90" x2="586.50" y2="220.80" stroke="#c4c4c4" stroke-width="0.9"/><line x1="834.00" y1="162.85" x2="844.40" y2="162.85" stroke="#86d36f" stroke-width="0.8" opacity="0.55"/><circle cx="839.20" cy="162.85" r="2.5" fill="#86d36f"/><text x="847.50" y="164.65" font-size="5.20" fill="#555" textLength="25.00" lengthAdjust="spacingAndGlyphs">유입 트래픽량</text><line x1="878.00" y1="162.85" x2="888.40" y2="162.85" stroke="#1fa9ea" stroke-width="0.8" opacity="0.55"/><circle cx="883.20" cy="162.85" r="2.5" fill="#1fa9ea"/><text x="891.50" y="164.65" font-size="5.20" fill="#555" textLength="25.50" lengthAdjust="spacingAndGlyphs">유출 트래픽량</text><circle cx="44.6" cy="83.00" r="2.85" fill="#62758f"/><path d="M43.2,82.40 L44.6,83.80 L46.0,82.40" stroke="#fff" stroke-width="0.85" fill="none"/><text x="49.80" y="84.90" font-size="6.50" fill="#5c5c5c" textLength="26.60" lengthAdjust="spacingAndGlyphs">마스터 노드</text><text x="49.80" y="99.08" font-size="6.50" fill="#505050" textLength="58.30" lengthAdjust="spacingAndGlyphs">gcs1 (192.168.100.180)</text><circle cx="44.6" cy="110.96" r="2.85" fill="#62758f"/><path d="M43.2,110.36 L44.6,111.76 L46.0,110.36" stroke="#fff" stroke-width="0.85" fill="none"/><text x="49.80" y="112.86" font-size="6.50" fill="#5c5c5c" textLength="26.60" lengthAdjust="spacingAndGlyphs">데이터 노드</text><text x="49.80" y="127.04" font-size="6.50" fill="#505050" textLength="58.30" lengthAdjust="spacingAndGlyphs">gcs2 (192.168.100.135)</text><text x="49.80" y="141.02" font-size="6.50" fill="#505050" textLength="58.30" lengthAdjust="spacingAndGlyphs">gcs3 (192.168.100.173)</text><text x="49.80" y="155.00" font-size="6.50" fill="#505050" textLength="58.30" lengthAdjust="spacingAndGlyphs">gcs4 (192.168.100.156)</text><text x="49.80" y="168.98" font-size="6.50" fill="#505050" textLength="58.30" lengthAdjust="spacingAndGlyphs">gcs5 (192.168.100.171)</text><text x="49.80" y="182.96" font-size="6.50" fill="#505050" textLength="58.30" lengthAdjust="spacingAndGlyphs">gcs6 (192.168.100.172)</text><text x="49.80" y="196.94" font-size="6.50" fill="#505050" textLength="58.30" lengthAdjust="spacingAndGlyphs">gcs7 (192.168.100.174)</text><text x="202.30" y="275.20" font-size="6.00" fill="#2b2b2b" text-anchor="middle" font-weight="bold" textLength="8.10" lengthAdjust="spacingAndGlyphs">NO</text><path d="M247.75,272.30 l2.05,-2.2 l2.05,2.2z M247.75,272.90 l2.05,2.2 l2.05,-2.2z" fill="#333"/><text x="254.45" y="275.20" font-size="6.00" fill="#2b2b2b" font-weight="bold" textLength="21.80" lengthAdjust="spacingAndGlyphs">측정 시작</text><path d="M337.80,272.30 l2.05,-2.2 l2.05,2.2z M337.80,272.90 l2.05,2.2 l2.05,-2.2z" fill="#333"/><text x="344.50" y="275.20" font-size="6.00" fill="#2b2b2b" font-weight="bold" textLength="28.00" lengthAdjust="spacingAndGlyphs">CPU 사용률</text><path d="M419.75,272.30 l2.05,-2.2 l2.05,2.2z M419.75,272.90 l2.05,2.2 l2.05,-2.2z" fill="#333"/><text x="426.45" y="275.20" font-size="6.00" fill="#2b2b2b" font-weight="bold" textLength="31.60" lengthAdjust="spacingAndGlyphs">메모리 사용률</text><path d="M493.90,272.30 l2.05,-2.2 l2.05,2.2z M493.90,272.90 l2.05,2.2 l2.05,-2.2z" fill="#333"/><text x="500.60" y="275.20" font-size="6.00" fill="#2b2b2b" font-weight="bold" textLength="32.00" lengthAdjust="spacingAndGlyphs">디스크 사용률</text><path d="M582.90,272.30 l2.05,-2.2 l2.05,2.2z M582.90,272.90 l2.05,2.2 l2.05,-2.2z" fill="#333"/><text x="589.60" y="275.20" font-size="6.00" fill="#2b2b2b" font-weight="bold" textLength="21.30" lengthAdjust="spacingAndGlyphs">IO WAIT</text><path d="M675.85,272.30 l2.05,-2.2 l2.05,2.2z M675.85,272.90 l2.05,2.2 l2.05,-2.2z" fill="#333"/><text x="682.55" y="275.20" font-size="6.00" fill="#2b2b2b" font-weight="bold" textLength="21.70" lengthAdjust="spacingAndGlyphs">평균 부하</text><path d="M764.00,272.30 l2.05,-2.2 l2.05,2.2z M764.00,272.90 l2.05,2.2 l2.05,-2.2z" fill="#333"/><text x="770.70" y="275.20" font-size="6.00" fill="#2b2b2b" font-weight="bold" textLength="31.70" lengthAdjust="spacingAndGlyphs">유입 트래픽량</text><path d="M856.90,272.30 l2.05,-2.2 l2.05,2.2z M856.90,272.90 l2.05,2.2 l2.05,-2.2z" fill="#333"/><text x="863.60" y="275.20" font-size="6.00" fill="#2b2b2b" font-weight="bold" textLength="31.60" lengthAdjust="spacingAndGlyphs">유출 트래픽량</text><text x="116.00" y="51.10" font-size="7.40" fill="#fff" font-weight="bold" textLength="36.80" lengthAdjust="spacingAndGlyphs">클러스터 관리</text><path d="M157.6,46.6 L160.6,48.8 L157.6,51" stroke="#fff" stroke-width="0.8" fill="none"/><text x="165.00" y="51.10" font-size="7.40" fill="#fff" font-weight="bold" textLength="17.60" lengthAdjust="spacingAndGlyphs">시스템</text><text x="58.80" y="51.10" font-size="8.00" fill="#fff" font-weight="bold" textLength="52.20" lengthAdjust="spacingAndGlyphs">Big Data Platform</text><text x="206.50" y="50.60" font-size="6.90" fill="#444" textLength="35.50" lengthAdjust="spacingAndGlyphs">노드 정보 조회</text><text x="261.00" y="50.60" font-size="6.90" fill="#444" textLength="36.00" lengthAdjust="spacingAndGlyphs">장애 정보 조회</text><text x="315.80" y="50.60" font-size="6.90" fill="#444" textLength="62.40" lengthAdjust="spacingAndGlyphs">리소스 사용률 (모니터링)</text><text x="396.80" y="50.60" font-size="6.90" fill="#303030" font-weight="bold" textLength="63.20" lengthAdjust="spacingAndGlyphs">리소스 사용률 (이력조회)</text><text x="197.80" y="68.40" font-size="6.90" fill="#444" textLength="28.60" lengthAdjust="spacingAndGlyphs">2017-09-07</text><g transform="translate(239.40,62.7)"><rect x="0" y="1" width="6.4" height="5.4" rx="0.8" fill="#e3e3e3"/><rect x="0.8" y="2.6" width="4.8" height="3" fill="#ececec"/><rect x="1.3" y="0" width="0.8" height="1.8" fill="#d6d6d6"/><rect x="4.3" y="0" width="0.8" height="1.8" fill="#d6d6d6"/></g><text x="255.90" y="68.40" font-size="6.90" fill="#444" textLength="6.20" lengthAdjust="spacingAndGlyphs">00</text><path d="M277.60,64.7 l2.7,2.7 l2.7,-2.7" stroke="#8a8a8a" stroke-width="0.8" fill="none"/><text x="317.00" y="68.40" font-size="6.90" fill="#444" textLength="28.60" lengthAdjust="spacingAndGlyphs">2017-09-07</text><g transform="translate(358.60,62.7)"><rect x="0" y="1" width="6.4" height="5.4" rx="0.8" fill="#e3e3e3"/><rect x="0.8" y="2.6" width="4.8" height="3" fill="#ececec"/><rect x="1.3" y="0" width="0.8" height="1.8" fill="#d6d6d6"/><rect x="4.3" y="0" width="0.8" height="1.8" fill="#d6d6d6"/></g><text x="374.90" y="68.40" font-size="6.90" fill="#444" textLength="6.20" lengthAdjust="spacingAndGlyphs">15</text><path d="M396.60,64.7 l2.7,2.7 l2.7,-2.7" stroke="#8a8a8a" stroke-width="0.8" fill="none"/><text x="291.50" y="68.50" font-size="6.60" fill="#555" textLength="3.70" lengthAdjust="spacingAndGlyphs">H</text><path d="M301.6,67.3 q0.8,-0.9 1.7,0 t1.7,0" stroke="#777" stroke-width="0.7" fill="none"/><text x="411.60" y="68.50" font-size="6.60" fill="#555" textLength="3.70" lengthAdjust="spacingAndGlyphs">H</text><text x="894.70" y="67.40" font-size="6.30" fill="#fff" font-weight="bold" textLength="9.90" lengthAdjust="spacingAndGlyphs">검색</text><text x="191.20" y="255.40" font-size="6.30" fill="#3a3a3a" textLength="66.20" lengthAdjust="spacingAndGlyphs">시스템 자원 사용량 상세 이력</text><text x="755.90" y="254.00" font-size="6.20" fill="#9a9a9a" textLength="10.90" lengthAdjust="spacingAndGlyphs">검색</text><text x="898.60" y="254.40" font-size="6.50" fill="#2b2b2b" font-weight="bold" textLength="20.60" lengthAdjust="spacingAndGlyphs">다운로드</text><path d="M43.5,46.1 V51.7 M45.3,51.7 V48.4 Q45.4,46.6 47.9,46.2 M49.35,46.1 V51.7 M56.3,46.55 H52.4 Q51.05,46.55 51.05,47.7 Q51.05,48.95 52.4,48.95 H54.8 Q56.1,48.95 56.1,50.1 Q56.1,51.25 54.8,51.25 H50.9" stroke="#fff" stroke-width="1.15" fill="none"/><g transform="translate(886,62.9)" stroke="#fff" stroke-width="0.95" fill="none"><circle cx="2.6" cy="2.6" r="2.1"/><line x1="4.1" y1="4.1" x2="5.7" y2="5.7"/></g><g transform="translate(898.6,43.6)" fill="#7a8ca3"><circle cx="4.8" cy="2.5" r="2.3"/><path d="M0.2,8.6 Q0.4,5.4 3.4,5.0 L6.2,5.0 Q9.2,5.4 9.4,8.6Z"/></g><g transform="translate(915.6,44.2)" stroke="#7a8ca3" stroke-width="0.9" fill="none"><path d="M4.6,0.5 H1.1 Q0.5,0.5 0.5,1.1 V7.7 Q0.5,8.3 1.1,8.3 H4.6 M4.6,0.5 V2.3 M4.6,6.5 V8.3"/><path d="M2.6,4.4 H8.0 M6.4,2.8 L8.1,4.4 L6.4,6.0"/></g><g transform="translate(746,248.6)" stroke="#a9cdef" stroke-width="0.8" fill="none"><circle cx="2.6" cy="2.6" r="2"/><line x1="4" y1="4" x2="5.6" y2="5.6"/></g><g transform="translate(890.2,248.3)"><path d="M3.1,0.2 V4.2 M1.3,2.5 L3.1,4.3 L4.9,2.5" stroke="#2a8ee3" stroke-width="1.1" fill="none"/><rect x="0.2" y="5.2" width="5.8" height="1.6" fill="#2a8ee3"/></g></svg>
</body></html>
